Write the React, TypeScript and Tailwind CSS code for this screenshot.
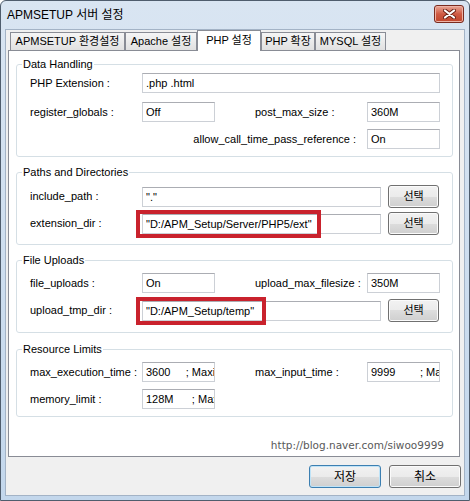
import React from 'react';

const ui = "font-['Liberation_Sans','Noto_Sans_CJK_KR',sans-serif]";

const tabs = [
    { label: 'APMSETUP 환경설정', width: 'w-[115px]' },
    { label: 'Apache 설정', width: 'w-[72px]' },
    { label: 'PHP 설정', width: 'w-[64px]', active: true },
    { label: 'PHP 확장', width: 'w-[54px]' },
    { label: 'MYSQL 설정', width: 'w-[71px]' },
];

const Field = ({ value, className = '' }: { value: string; className?: string }) => (
    <input
        readOnly
        value={value}
        className={`h-[20px] min-w-0 border border-[#ccd0d6] border-t-[#abadb3] bg-white pl-[3px] text-[11px] text-black outline-none ${className}`}
    />
);

const WinButton = ({ children, className = '', focused = false }: { children: React.ReactNode; className?: string; focused?: boolean }) => (
    <button
        type="button"
        className={`flex shrink-0 items-center justify-center rounded-[3px] border text-[11px] text-black bg-[linear-gradient(to_bottom,#f2f2f2_0%,#ebebeb_50%,#dddddd_50%,#cfcfcf_100%)] ${
            focused ? 'border-[#3c7fb1] shadow-[inset_0_0_0_1px_#bfe3f7]' : 'border-[#707070] shadow-[inset_0_0_0_1px_#fbfbfb]'
        } ${className}`}
    >
        {children}
    </button>
);

const Group = ({ title, className = '', inner = '', children }: { title: string; className?: string; inner?: string; children: React.ReactNode }) => (
    <fieldset className={`ml-[7px] mr-[6px] rounded-[3px] border border-[#d5dfe5] ${className}`}>
        <legend className="ml-[5px] px-[1px] text-[11px] leading-[14px]">{title}</legend>
        <div className={`pl-[13px] pr-[12px] ${inner}`}>{children}</div>
    </fieldset>
);

const Label = ({ children }: { children: React.ReactNode }) => (
    <span className="w-[112px] shrink-0 whitespace-nowrap">{children}</span>
);

// red annotation drawn over the screenshot
const Mark = ({ width }: { width: string }) => (
    <span className={`pointer-events-none absolute left-[-6px] top-[-4px] h-[28px] border-4 border-[#c9222d] ${width}`} />
);

const CloseButton = () => (
    <div className="mt-[4px] flex h-[18px] w-[30px] items-center justify-center rounded-[3px] border border-[#7a2b1f] bg-linear-to-b from-[#e8a797] via-[#cf5a43] to-[#c0452c] shadow-[inset_0_0_0_1px_#eeb3a6]">
        <svg width="13" height="10" viewBox="0 0 13 10">
            <path d="M2 1.5 L11 8.5 M11 1.5 L2 8.5" stroke="#6b2216" strokeWidth="4" strokeLinecap="round" />
            <path d="M2 1.5 L11 8.5 M11 1.5 L2 8.5" stroke="#ffffff" strokeWidth="2.2" strokeLinecap="round" />
        </svg>
    </div>
);

const App: React.FC = () => {
    return (
        <div className={`flex h-[501px] w-[470px] flex-col overflow-hidden rounded-t-[6px] border border-[#4f5d6d] bg-linear-to-b from-[#d9e5f2] to-[#c3d7ec] text-black ${ui}`}>
            {/* title bar */}
            <div className="flex h-[28px] shrink-0 items-start justify-between pl-[6px] pr-[5px]">
                <span className="mt-[6px] text-[12px] leading-[16px]">APMSETUP 서버 설정</span>
                <CloseButton />
            </div>

            {/* client area */}
            <div className="mx-[4px] flex h-[467px] shrink-0 flex-col border border-[#a3b3c6] bg-[#f0f0f0]">
                <div className="flex h-[20px] shrink-0 items-end pl-[4px]">
                    {tabs.map(tab =>
                        tab.active ? (
                            <div
                                key={tab.label}
                                className={`relative z-10 -mb-px flex h-[21px] shrink-0 items-center justify-center border border-b-0 border-[#898c95] bg-white pb-[2px] text-[11px] ${tab.width}`}
                            >
                                {tab.label}
                            </div>
                        ) : (
                            <div
                                key={tab.label}
                                className={`flex h-[18px] shrink-0 items-center justify-center border border-b-0 border-[#898c95] bg-linear-to-b from-[#f5f5f5] to-[#e1e1e1] text-[11px] ${tab.width}`}
                            >
                                {tab.label}
                            </div>
                        )
                    )}
                </div>

                <div className="ml-[2px] flex h-[407px] w-[452px] shrink-0 flex-col border border-[#898c95] bg-white text-[11px]">
                    <Group title="Data Handling" className="mt-[6px]" inner="pt-[2px] pb-[7px]">
                        <div className="flex h-[20px] items-center">
                            <Label>PHP Extension :</Label>
                            <Field value=".php .html" className="flex-1" />
                        </div>
                        <div className="mt-[9px] flex h-[20px] items-center">
                            <Label>register_globals :</Label>
                            <Field value="Off" className="w-[73px]" />
                            <span className="ml-auto w-[112px] shrink-0">post_max_size :</span>
                            <Field value="360M" className="w-[73px]" />
                        </div>
                        <div className="mt-[7px] flex h-[20px] items-center justify-end">
                            <span className="mr-[11px] whitespace-nowrap">allow_call_time_pass_reference :</span>
                            <Field value="On" className="w-[73px]" />
                        </div>
                    </Group>

                    <Group title="Paths and Directories" className="mt-[8px]" inner="pt-[6px] pb-[9px]">
                        <div className="flex h-[23px] items-center">
                            <Label>include_path :</Label>
                            <Field value='"."' className="flex-1" />
                            <WinButton className="ml-[7px] mr-[1px] h-[23px] w-[51px]">선택</WinButton>
                        </div>
                        <div className="mt-[4px] flex h-[23px] items-center">
                            <Label>extension_dir :</Label>
                            <div className="relative flex min-w-0 flex-1">
                                <Field value='"D:/APM_Setup/Server/PHP5/ext"' className="w-full" />
                                <Mark width="w-[185px]" />
                            </div>
                            <WinButton className="ml-[7px] mr-[1px] h-[23px] w-[51px]">선택</WinButton>
                        </div>
                    </Group>

                    <Group title="File Uploads" className="mt-[8px]" inner="pt-[6px] pb-[10px]">
                        <div className="flex h-[20px] items-center">
                            <Label>file_uploads :</Label>
                            <Field value="On" className="w-[73px]" />
                            <span className="ml-auto w-[112px] shrink-0">upload_max_filesize :</span>
                            <Field value="350M" className="w-[73px]" />
                        </div>
                        <div className="mt-[6px] flex h-[23px] items-center">
                            <Label>upload_tmp_dir :</Label>
                            <div className="relative flex min-w-0 flex-1">
                                <Field value='"D:/APM_Setup/temp"' className="w-full" />
                                <Mark width="w-[130px]" />
                            </div>
                            <WinButton className="ml-[7px] mr-[1px] h-[23px] w-[51px]">선택</WinButton>
                        </div>
                    </Group>

                    <Group title="Resource Limits" className="mt-[9px]" inner="pt-[6px] pb-[7px]">
                        <div className="flex h-[20px] items-center">
                            <Label>max_execution_time :</Label>
                            <Field value="3600     ; Maximum execution time of each script, in seconds" className="w-[73px]" />
                            <span className="ml-auto w-[112px] shrink-0">max_input_time :</span>
                            <Field value="9999        ; Maximum amount of time each script may spend parsing request data" className="w-[73px]" />
                        </div>
                        <div className="mt-[7px] flex h-[20px] items-center">
                            <Label>memory_limit :</Label>
                            <Field value="128M      ; Maximum amount of memory a script may consume" className="w-[73px]" />
                        </div>
                    </Group>

                    <span className="mr-[15px] mt-[21px] self-end font-['DejaVu_Sans',sans-serif] text-[10.5px] leading-[14px] text-[#595959]">
                        http://blog.naver.com/siwoo9999
                    </span>
                </div>

                <div className="mt-[8px] flex justify-end gap-[8px] pr-[3px]">
                    <WinButton focused className="h-[23px] w-[72px] text-[12px]">저장</WinButton>
                    <WinButton className="h-[23px] w-[72px] text-[12px]">취소</WinButton>
                </div>
            </div>
        </div>
    );
};

export default App;
